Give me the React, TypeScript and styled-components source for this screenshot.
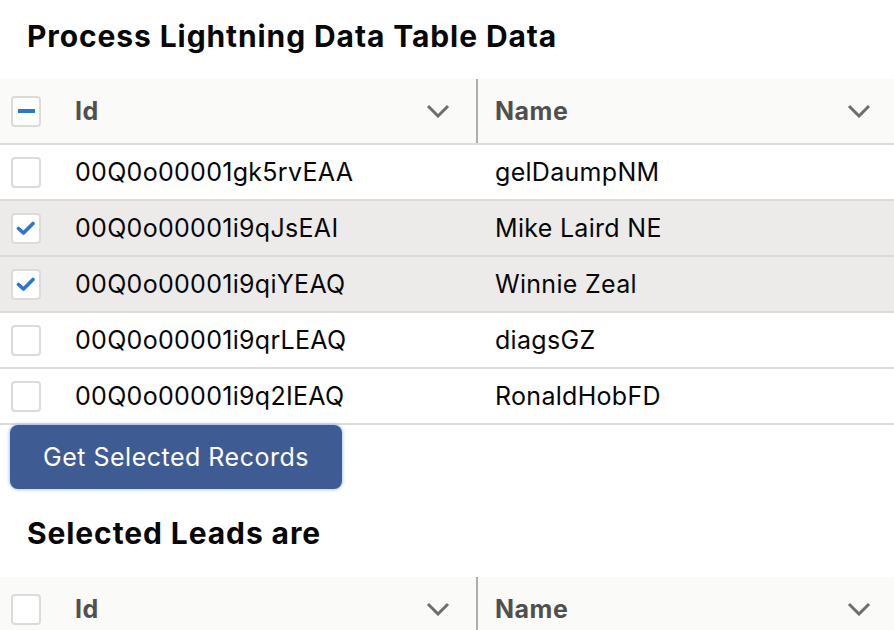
import React from "react";
import styled, { createGlobalStyle } from "styled-components";

const GlobalStyle = createGlobalStyle`
  html, body { margin: 0; padding: 0; background: #ffffff; }
  body { font-family: Inter, "Noto Sans", "Liberation Sans", sans-serif; color: #080707; }
  * { box-sizing: border-box; }
`;

const Page = styled.div`
  width: 894px;
  display: flex;
  flex-direction: column;
`;

const Heading = styled.h2<{ $height: number; $pb: number }>`
  margin: 0;
  height: ${(p) => p.$height}px;
  padding-left: 27px;
  padding-bottom: ${(p) => p.$pb}px;
  display: flex;
  align-items: center;
  font-size: 30px;
  font-weight: 700;
  color: #080707;
  letter-spacing: 0.9px;
`;

const Table = styled.div`
  display: flex;
  flex-direction: column;
  width: 100%;
`;

const Row = styled.div<{ $header?: boolean; $selected?: boolean }>`
  display: grid;
  grid-template-columns: 64px 414px 1fr;
  height: ${(p) => (p.$header ? 66 : 56)}px;
  background: ${(p) => (p.$header ? "#fafaf9" : p.$selected ? "#ecebea" : "#ffffff")};
  border-bottom: 2px solid #dddbda;
  font-size: 25px;
  letter-spacing: 0.3px;
`;

const CheckCell = styled.div`
  display: flex;
  align-items: center;
  padding-left: 11px;
`;

const Cell = styled.div<{ $pl: number; $pr?: number; $divider?: boolean }>`
  display: flex;
  align-items: center;
  padding-left: ${(p) => p.$pl}px;
  padding-right: ${(p) => p.$pr ?? 0}px;
  min-width: 0;
  white-space: nowrap;
  color: #080707;
  ${(p) => (p.$divider ? "border-right: 2px solid #b0adab;" : "")}
`;

const HeadCell = styled(Cell)`
  justify-content: space-between;
  font-weight: 700;
  color: #514f4d;
  letter-spacing: 0.5px;
`;

const Box = styled.div`
  width: 30px;
  height: 31px;
  border: 2px solid #dddbda;
  border-radius: 4px;
  background: #ffffff;
  display: flex;
  align-items: center;
  justify-content: center;
`;

const Minus = styled.span`
  width: 17px;
  height: 4px;
  background: #2e74d1;
`;

const Chevron = () => (
  <svg width="24" height="14" viewBox="0 0 24 14" fill="none">
    <path d="M2 2 L12 12 L22 2" stroke="#706e6b" strokeWidth="3" />
  </svg>
);

const Check = () => (
  <svg width="20" height="16" viewBox="0 0 20 16" fill="none">
    <path d="M2.5 8.5 L7.5 13 L17 3.5" stroke="#2e74d1" strokeWidth="3.6" strokeLinecap="round" strokeLinejoin="round" />
  </svg>
);

const Checkbox = ({ state }: { state: "none" | "checked" | "partial" }) => (
  <Box>
    {state === "checked" && <Check />}
    {state === "partial" && <Minus />}
  </Box>
);

const ButtonBar = styled.div`
  padding-left: 10px;
  display: flex;
`;

const Button = styled.button`
  width: 332px;
  height: 64px;
  border: none;
  border-radius: 8px;
  background: #3e5c93;
  color: #ffffff;
  font-family: Inter, "Noto Sans", sans-serif;
  font-size: 25px;
  font-weight: 400;
  letter-spacing: 0.5px;
  box-shadow: 0 0 3px 1px rgba(120, 170, 240, 0.6);
  padding: 0;
  cursor: pointer;
`;

type Lead = { id: string; name: string; selected: boolean };

const leads: Lead[] = [
  { id: "00Q0o00001gk5rvEAA", name: "gelDaumpNM", selected: false },
  { id: "00Q0o00001i9qJsEAI", name: "Mike Laird NE", selected: true },
  { id: "00Q0o00001i9qiYEAQ", name: "Winnie Zeal", selected: true },
  { id: "00Q0o00001i9qrLEAQ", name: "diagsGZ", selected: false },
  { id: "00Q0o00001i9q2IEAQ", name: "RonaldHobFD", selected: false },
];

const HeaderRow = ({ state }: { state: "none" | "checked" | "partial" }) => (
  <Row $header>
    <CheckCell>
      <Checkbox state={state} />
    </CheckCell>
    <HeadCell $pl={11} $pr={26} $divider>
      <span>Id</span>
      <Chevron />
    </HeadCell>
    <HeadCell $pl={17} $pr={23}>
      <span>Name</span>
      <Chevron />
    </HeadCell>
  </Row>
);

export default function App() {
  return (
    <Page>
      <GlobalStyle />
      <Heading $height={79} $pb={8}>Process Lightning Data Table Data</Heading>
      <Table>
        <HeaderRow state="partial" />
        {leads.map((l) => (
          <Row key={l.id} $selected={l.selected}>
            <CheckCell>
              <Checkbox state={l.selected ? "checked" : "none"} />
            </CheckCell>
            <Cell $pl={11}>{l.id}</Cell>
            <Cell $pl={17}>{l.name}</Cell>
          </Row>
        ))}
      </Table>
      <ButtonBar>
        <Button>Get Selected Records</Button>
      </ButtonBar>
      <Heading $height={88} $pb={0}>Selected Leads are</Heading>
      <Table>
        <HeaderRow state="none" />
      </Table>
    </Page>
  );
}
